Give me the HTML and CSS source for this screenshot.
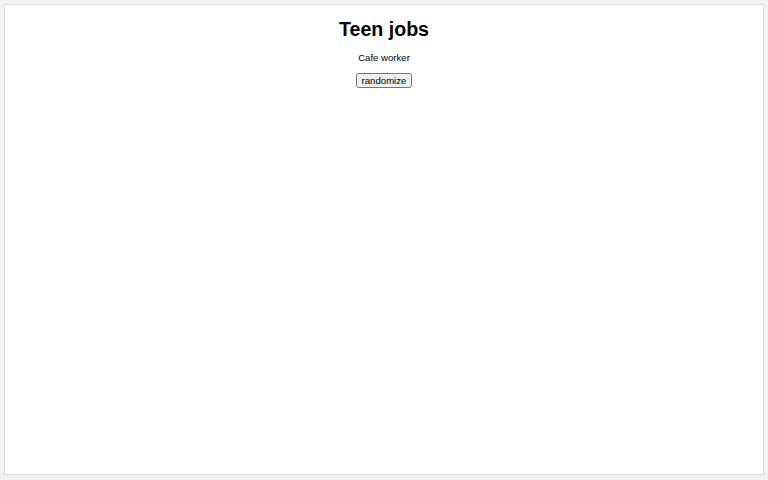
FILE: index.html
```html
<!DOCTYPE html>
<html lang="en">
<head>
    <meta charset="UTF-8">
    <title>Teen jobs</title>
    <link rel="stylesheet" href="styles.css">
</head>
<body>
    <div class="frame">
        <h1>Teen jobs</h1>
        <p class="job" id="job">Cafe worker</p>
        <button type="button" class="shuffle">randomize</button>
    </div>
</body>
</html>
```

FILE: styles.css
```css
* {
    box-sizing: border-box;
}

body {
    margin: 0;
    padding: 4px 4px 5px;
    height: 100vh;
    background: #f2f2f2;
    font-family: 'Liberation Sans', Arial, sans-serif;
    color: #000;
}

.frame {
    height: 100%;
    background: #fff;
    border: 1px solid #dcdcdc;
    display: flex;
    flex-direction: column;
    align-items: center;
    padding-top: 13px;
}

.frame h1 {
    margin: 0;
    font-size: 19.6px;
    font-weight: bold;
}

.job {
    margin: 11px 0 0;
    font-size: 9.6px;
}

.shuffle {
    margin-top: 10px;
    font-family: 'Liberation Sans', Arial, sans-serif;
    font-size: 9.6px;
    padding: 0 4px;
    height: 15px;
}
```
